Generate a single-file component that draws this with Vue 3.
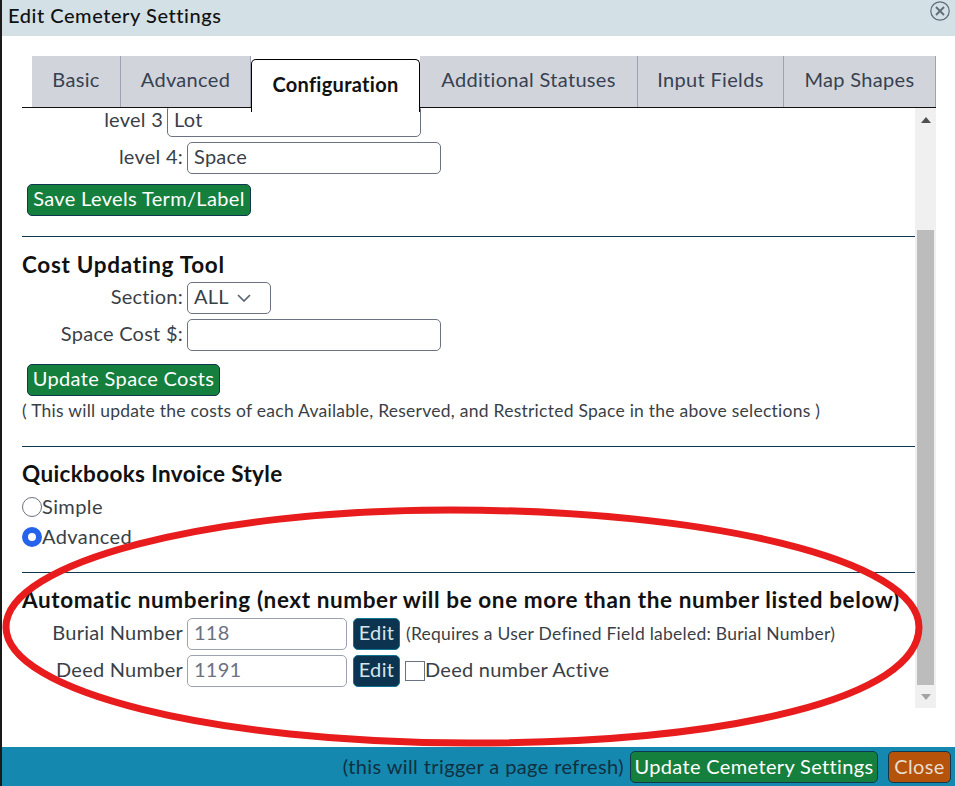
<script setup>
const tabs = [
  { label: 'Basic', width: 89 },
  { label: 'Advanced', width: 130 },
  { label: 'Configuration', width: 169, active: true },
  { label: 'Additional Statuses', width: 218 },
  { label: 'Input Fields', width: 146 },
  { label: 'Map Shapes', width: 152 }
]
</script>

<template>
  <div class="dialog">
    <header class="head">
      <span class="title">Edit Cemetery Settings</span>
      <svg class="x" width="20" height="20" viewBox="0 0 20 20" fill="none" stroke="#5f6b75" stroke-width="1.2">
        <circle cx="10" cy="10" r="9.2" />
        <path d="M6 6l8 8M14 6l-8 8" stroke-width="1.8" />
      </svg>
    </header>

    <main class="body">
      <nav class="tabs">
        <div
          v-for="t in tabs"
          :key="t.label"
          class="tab"
          :class="{ active: t.active }"
          :style="{ width: t.width + 'px' }"
        >{{ t.label }}</div>
      </nav>

      <div class="panel">
        <div class="content">
          <div class="row short"><label>level 3</label><input class="field wide" value="Lot" /></div>
          <div class="row"><label>level 4:</label><input class="field wide" value="Space" /></div>
          <button class="btn green save">Save Levels Term/Label</button>
          <hr />

          <h3 class="cost-title">Cost Updating Tool</h3>
          <div class="row">
            <label>Section:</label>
            <div class="field select">ALL
              <svg width="14" height="8" viewBox="0 0 14 8" fill="none" stroke="#5b6675" stroke-width="1.7"><path d="M1 1l6 6 6-6" /></svg>
            </div>
          </div>
          <div class="row"><label>Space Cost $:</label><input class="field wide" /></div>
          <button class="btn green cost">Update Space Costs</button>
          <p class="note">( This will update the costs of each Available, Reserved, and Restricted Space in the above selections )</p>
          <hr class="second" />

          <h3 class="qb-title">Quickbooks Invoice Style</h3>
          <div class="radio first"><span class="dot"></span><span class="radio-text">Simple</span></div>
          <div class="radio"><span class="dot on"></span><span class="radio-text">Advanced</span></div>
          <hr class="third" />

          <h3 class="nowrap">Automatic numbering (next number will be one more than the number listed below)</h3>
          <div class="row">
            <label>Burial Number</label>
            <input class="field num" value="118" disabled />
            <button class="btn navy">Edit</button>
            <span class="req">(Requires a User Defined Field labeled: Burial Number)</span>
          </div>
          <div class="row">
            <label>Deed Number</label>
            <input class="field num" value="1191" disabled />
            <button class="btn navy">Edit</button>
            <span class="check"></span><span class="active-label">Deed number Active</span>
          </div>
        </div>

        <div class="scrollbar">
          <svg class="arrow" width="10" height="6" viewBox="0 0 10 6"><path d="M5 0l5 6H0z" fill="#505050" /></svg>
          <div class="thumb"></div>
          <svg class="arrow" width="10" height="6" viewBox="0 0 10 6"><path d="M5 6L0 0h10z" fill="#a3a3a3" /></svg>
        </div>
      </div>
    </main>

    <footer class="foot">
      <span class="hint">(this will trigger a page refresh)</span>
      <button class="btn green update">Update Cemetery Settings</button>
      <button class="btn orange">Close</button>
    </footer>

    <svg class="ring" width="955" height="786" viewBox="0 0 955 786" fill="none">
      <path d="M6 627C6 562 210 510 450 510C710 510 919 560 919 627C919 698 730 743 470 743C215 743 6 692 6 627Z" stroke="#e81c1c" stroke-width="7" />
    </svg>
  </div>
</template>

<style scoped>
.dialog {
  position: relative;
  box-sizing: border-box;
  width: 955px;
  height: 786px;
  display: flex;
  flex-direction: column;
  border-left: 2px solid #1a1a1a;
  background: #fff;
  color: #3a3f47;
  font-family: "Lato", sans-serif;
  font-size: 20px;
  letter-spacing: 0.25px;
  overflow: hidden;
}
.head {
  height: 36px;
  flex: none;
  display: flex;
  justify-content: space-between;
  background: #d3e0e6;
  padding: 0 5px 0 6px;
}
.title {
  font-size: 20px;
  font-weight: 500;
  letter-spacing: 0.55px;
  line-height: 30px;
  color: #111;
}
.x { margin-top: 1px; }
.body {
  flex: 1;
  min-height: 0;
  padding: 20px 19px 0 20px;
  display: flex;
  flex-direction: column;
}
.tabs {
  flex: none;
  height: 51px;
  margin-left: 10px;
  display: flex;
  position: relative;
  z-index: 2;
}
.tab {
  box-sizing: border-box;
  flex: none;
  background: #d1d5db;
  border-right: 1px solid #9ca3af;
  text-align: center;
  font-size: 20px;
  letter-spacing: 0.32px;
  line-height: 47px;
  color: #374151;
}
.tab.active {
  height: 53px;
  margin-top: 3px;
  background: #fff;
  border: 1px solid #000;
  border-bottom: 0;
  border-radius: 5px 5px 0 0;
  font-weight: 700;
  letter-spacing: 0.3px;
  line-height: 49px;
  color: #111;
}
.panel {
  flex: none;
  height: 600px;
  border-top: 1px solid #111;
  display: flex;
  overflow: hidden;
}
.content {
  flex: 1;
  min-width: 0;
  margin-top: -3px;
}
.row {
  display: flex;
  align-items: center;
  height: 32px;
  margin-bottom: 5px;
}
.row label {
  width: 161px;
  margin-right: 4px;
  padding-bottom: 5px;
  text-align: right;
  flex: none;
}
.row.short label { width: 141px; }
.field {
  box-sizing: border-box;
  height: 32px;
  padding: 0 6px 5px;
  border: 1px solid #6b7280;
  border-radius: 5px;
  background: #fff;
  font: inherit;
  letter-spacing: inherit;
  color: #3a3f47;
}
.wide { width: 254px; }
.select {
  width: 84px;
  display: flex;
  align-items: center;
  gap: 8px;
}
.select svg { margin-top: 5px; }
.num {
  width: 160px;
  border-color: #9ca3af;
  color: #6b7280;
  opacity: 1;
}
.btn {
  box-sizing: border-box;
  height: 32px;
  padding: 0 0 5px;
  border: 1px solid #0f3850;
  border-radius: 5px;
  font: inherit;
  letter-spacing: 0.35px;
  color: #fff;
  white-space: nowrap;
}
.green { background: #15803d; }
.navy { width: 47px; margin-left: 6px; background: #0c3450; border-color: #0e7490; color: #d8e4ea; }
.orange { width: 63px; background: #b45309; color: #e8ddd0; }
.save { display: block; width: 224px; margin: 10px 0 0 5px; }
.cost { display: block; width: 193px; margin: 13px 0 0 5px; }
hr {
  height: 1px;
  margin: 20px 0 0;
  border: 0;
  background: #0f3850;
}
hr.second { margin-top: 24px; }
hr.third { margin-top: 20px; }
h3 {
  margin: 14px 0 4px;
  height: 27px;
  font-size: 22.5px;
  letter-spacing: 0.6px;
  line-height: 25px;
  font-weight: 700;
  color: #111;
}
.cost-title { letter-spacing: 0.7px; line-height: 27px; }
.qb-title { letter-spacing: 0.35px; }
.nowrap { white-space: nowrap; }
.note {
  margin: 4px 0 0;
  font-size: 17.5px;
  line-height: 22px;
  white-space: nowrap;
}
.radio {
  display: flex;
  align-items: center;
  height: 30px;
}
.radio.first { margin-top: 4px; }
.radio-text { padding-bottom: 3px; letter-spacing: 0.4px; }
.dot {
  box-sizing: border-box;
  width: 20px;
  height: 20px;
  border: 1px solid #6b7280;
  border-radius: 50%;
  flex: none;
}
.dot.on {
  border: 6px solid #2563eb;
}
.req { margin-left: 6px; padding-bottom: 2px; font-size: 17.5px; white-space: nowrap; }
.check {
  box-sizing: border-box;
  width: 20px;
  height: 20px;
  margin-left: 5px;
  border: 1px solid #6b7280;
  flex: none;
}
.active-label { padding-bottom: 5px; white-space: nowrap; }
.scrollbar {
  flex: none;
  width: 21px;
  background: #f0f0f0;
  display: flex;
  flex-direction: column;
  align-items: center;
  padding: 9px 0 8px;
  box-sizing: border-box;
}
.thumb {
  width: 17px;
  height: 456px;
  margin: 107px 0 9px;
  background: #bcbcbc;
}
.arrow { flex: none; }
.foot {
  box-sizing: border-box;
  flex: none;
  height: 39px;
  display: flex;
  align-items: center;
  justify-content: flex-end;
  gap: 10px;
  padding: 0 4px 0 0;
  background: #1488ae;
}
.foot .btn { padding-bottom: 2px; }
.hint { color: #10303f; margin-right: -4px; letter-spacing: 0.4px; padding-bottom: 2px; }
.update { width: 248px; }
.ring {
  position: absolute;
  left: -2px;
  top: 0;
  pointer-events: none;
}
</style>
